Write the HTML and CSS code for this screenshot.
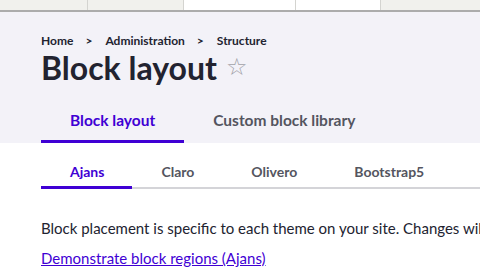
FILE: index.html
```html
<!DOCTYPE html>
<html>
<head>
    <title>Block layout</title>
    <link rel="stylesheet" href="styles.css">
</head>
<body>
    <div class="toolbar">
        <div class="tool-cell"></div>
        <div class="tool-cell"></div>
        <div class="tool-cell white"></div>
        <div class="tool-cell white"></div>
        <div class="tool-cell last"></div>
    </div>
    <div class="page-header">
        <nav class="breadcrumb">
            <a href="#">Home</a>
            <span class="sep">&gt;</span>
            <a href="#">Administration</a>
            <span class="sep">&gt;</span>
            <a href="#">Structure</a>
        </nav>
        <h1 class="title">Block layout <span class="star">&#9734;</span></h1>
        <ul class="primary-tabs">
            <li class="active"><a href="#">Block layout</a></li>
            <li><a href="#">Custom block library</a></li>
        </ul>
    </div>
    <div class="content">
        <ul class="secondary-tabs">
            <li class="active"><a href="#">Ajans</a></li>
            <li><a href="#">Claro</a></li>
            <li><a href="#">Olivero</a></li>
            <li><a href="#">Bootstrap5</a></li>
        </ul>
        <p class="help">Block placement is specific to each theme on your site. Changes will not be saved until you click Save blocks at the bottom of the page.</p>
        <p class="demo"><a class="demo-link" href="#">Demonstrate block regions (Ajans)</a></p>
    </div>
</body>
</html>
```
FILE: styles.css
```css
body {
    margin: 0;
    font-family: Lato, "Noto Sans", sans-serif;
    color: #222330;
    background-color: #ffffff;
    overflow: hidden;
}

a {
    text-decoration: none;
    color: inherit;
}

.toolbar {
    display: flex;
    height: 10px;
    background-color: #f1f1ed;
    border-bottom: 2px solid #acacac;
}

.tool-cell {
    border-right: 1px solid #d4d4d0;
}

.tool-cell:first-child {
    width: 87px;
}

.tool-cell:nth-child(2) {
    width: 95px;
}

.tool-cell:nth-child(3) {
    width: 111px;
}

.tool-cell:nth-child(4) {
    width: 84px;
}

.tool-cell.white {
    background-color: #ffffff;
}

.tool-cell.last {
    flex: 1;
    border-right: none;
}

.page-header {
    background-color: #f3f2f8;
    padding: 22px 0 0 41px;
}

.breadcrumb {
    font-size: 12px;
    font-weight: 700;
    display: flex;
    line-height: 14px;
}

.breadcrumb .sep {
    margin: 0 13px 0 12px;
}

.title {
    margin: 0;
    font-size: 32px;
    font-weight: 700;
    line-height: 40px;
    height: 40px;
}

.star {
    color: #a2a2a8;
    font-weight: 400;
    font-size: 24px;
    line-height: 1;
    vertical-align: 5px;
    margin-left: 1px;
}

.primary-tabs,
.secondary-tabs {
    list-style: none;
    margin: 0;
    padding: 0;
    display: flex;
}

.primary-tabs {
    margin-top: 16px;
}

.primary-tabs li a {
    display: block;
    font-size: 15.5px;
    font-weight: 700;
    color: #545560;
    padding: 7px 29px 0 29px;
    height: 29px;
    border-bottom: 3px solid transparent;
}

.primary-tabs li.active a,
.secondary-tabs li.active a {
    color: #3f00d4;
    border-bottom-color: #3f00d4;
}

.content {
    padding: 0 0 0 41px;
}

.secondary-tabs {
    margin-top: 15px;
    border-bottom: 2px solid #d4d4d8;
}

.secondary-tabs li a {
    display: block;
    font-size: 14px;
    font-weight: 700;
    color: #545560;
    padding: 5px 28px 0 29px;
    height: 23px;
    border-bottom: 3px solid transparent;
    margin-bottom: -2px;
}

.help {
    margin: 30px 0 0 0;
    font-size: 15px;
    line-height: 18px;
    white-space: nowrap;
}

.demo {
    margin: 12px 0 0 0;
    font-size: 15px;
    line-height: 18px;
}

.demo-link {
    color: #3f00d4;
    text-decoration: underline;
}
```
